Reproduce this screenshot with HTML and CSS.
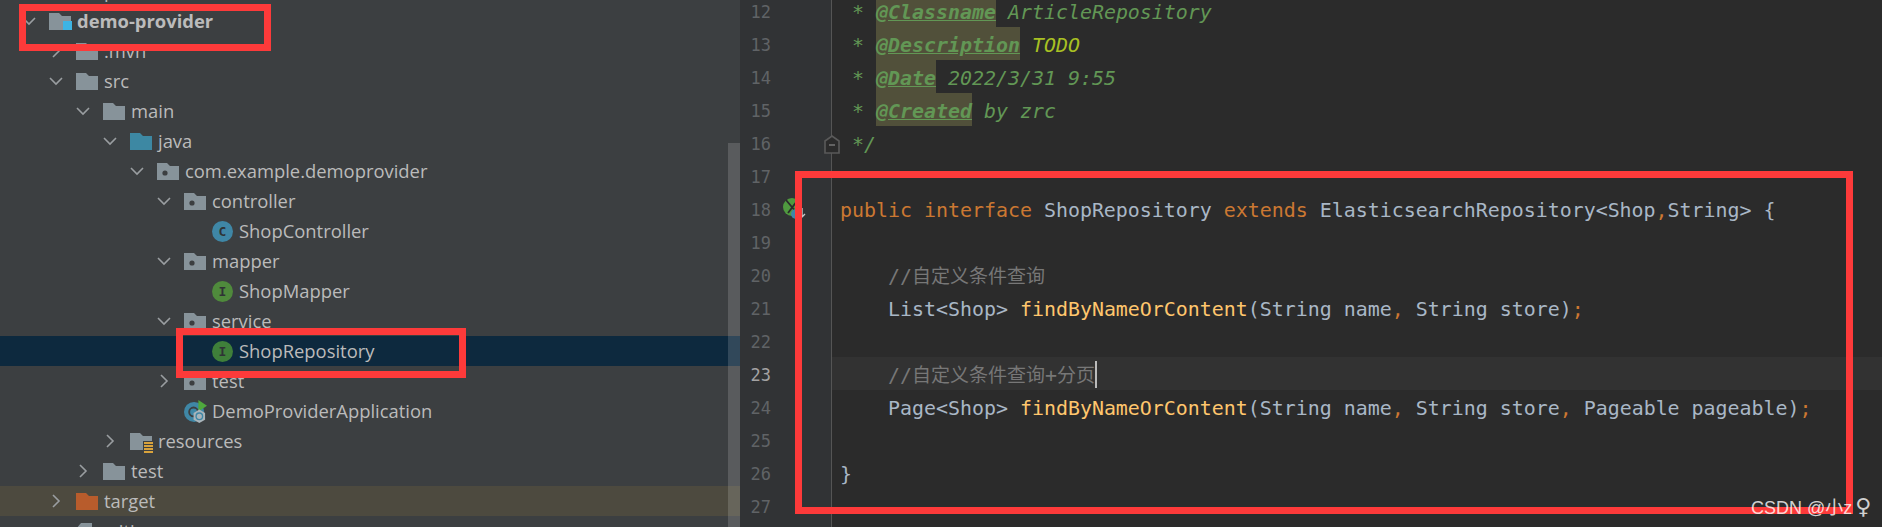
FILE: index.html
```html
<!DOCTYPE html>
<html lang="en">
<head>
<meta charset="utf-8">
<title>ShopRepository</title>
<link rel="stylesheet" href="styles.css">
</head>
<body>
<svg class="defs" width="0" height="0" aria-hidden="true">
  <symbol id="chev-d" viewBox="0 0 14 9"><path d="M1 1l6 6 6-6" fill="none" stroke="#9a9ea1" stroke-width="1.6"/></symbol>
  <symbol id="chev-r" viewBox="0 0 9 14"><path d="M1 1l6 6-6 6" fill="none" stroke="#9a9ea1" stroke-width="1.6"/></symbol>
  <symbol id="folder" viewBox="0 0 22 17"><path d="M0 0h10l3 3h9v14H0z" fill="currentColor"/></symbol>
  <symbol id="pkg" viewBox="0 0 22 17"><path d="M0 0h10l3 3h9v14H0z" fill="#87939a"/><circle cx="8" cy="10" r="2.6" fill="#3c3f41"/></symbol>
</svg>
<div class="app">
  <aside class="tree">
    <div class="row d1 clip"><span class="chev"></span><span class="ic"></span><span class="name">p</span></div>
    <div class="row d0"><span class="chev"><svg class="cd"><use href="#chev-d"/></svg></span><span class="ic"><svg class="modf" viewBox="0 0 23 17"><path d="M0 0h10l3 3h9v6h-8v8H0z" fill="#87939a"/><rect x="14" y="8" width="9" height="9" fill="#3db4e4"/></svg></span><span class="name bold">demo-provider</span></div>
    <div class="row d1"><span class="chev"><svg class="cr"><use href="#chev-r"/></svg></span><span class="ic"><svg class="fi grey"><use href="#folder"/></svg></span><span class="name">.mvn</span></div>
    <div class="row d1"><span class="chev"><svg class="cd"><use href="#chev-d"/></svg></span><span class="ic"><svg class="fi grey"><use href="#folder"/></svg></span><span class="name">src</span></div>
    <div class="row d2"><span class="chev"><svg class="cd"><use href="#chev-d"/></svg></span><span class="ic"><svg class="fi grey"><use href="#folder"/></svg></span><span class="name">main</span></div>
    <div class="row d3"><span class="chev"><svg class="cd"><use href="#chev-d"/></svg></span><span class="ic"><svg class="fi blue"><use href="#folder"/></svg></span><span class="name">java</span></div>
    <div class="row d4"><span class="chev"><svg class="cd"><use href="#chev-d"/></svg></span><span class="ic"><svg class="fi"><use href="#pkg"/></svg></span><span class="name">com.example.demoprovider</span></div>
    <div class="row d5"><span class="chev"><svg class="cd"><use href="#chev-d"/></svg></span><span class="ic"><svg class="fi"><use href="#pkg"/></svg></span><span class="name">controller</span></div>
    <div class="row d6"><span class="chev"></span><span class="ic"><span class="badge cls">C</span></span><span class="name">ShopController</span></div>
    <div class="row d5"><span class="chev"><svg class="cd"><use href="#chev-d"/></svg></span><span class="ic"><svg class="fi"><use href="#pkg"/></svg></span><span class="name">mapper</span></div>
    <div class="row d6"><span class="chev"></span><span class="ic"><span class="badge ifc">I</span></span><span class="name">ShopMapper</span></div>
    <div class="row d5"><span class="chev"><svg class="cd"><use href="#chev-d"/></svg></span><span class="ic"><svg class="fi"><use href="#pkg"/></svg></span><span class="name">service</span></div>
    <div class="row d6 selected"><span class="chev"></span><span class="ic"><span class="badge ifc">I</span></span><span class="name">ShopRepository</span></div>
    <div class="row d5"><span class="chev"><svg class="cr"><use href="#chev-r"/></svg></span><span class="ic"><svg class="fi"><use href="#pkg"/></svg></span><span class="name">test</span></div>
    <div class="row d5"><span class="chev"></span><span class="ic"><svg class="appi" viewBox="0 0 24 24"><circle cx="10.5" cy="12.5" r="10.5" fill="#3f87a6"/><circle cx="10" cy="12.5" r="4.6" fill="none" stroke="#3c3f41" stroke-width="2"/><path d="M15 0l9 6-9 6z" fill="#4fa83d"/><path d="M16 10l6 3.5v7L16 24l-6-3.5v-7z" fill="#a9b4ba"/><circle cx="16" cy="17" r="3.4" fill="none" stroke="#3f87a6" stroke-width="1.4"/></svg></span><span class="name">DemoProviderApplication</span></div>
    <div class="row d3"><span class="chev"><svg class="cr"><use href="#chev-r"/></svg></span><span class="ic"><svg class="resi" viewBox="0 0 23 20"><path d="M0 0h10l3 3h9v5H13v9H0z" fill="#87939a"/><path d="M14 9h9v2h-9zM14 12h9v2h-9zM14 15h9v2h-9zM14 18h9v2h-9z" fill="#d9a33c"/></svg></span><span class="name">resources</span></div>
    <div class="row d2"><span class="chev"><svg class="cr"><use href="#chev-r"/></svg></span><span class="ic"><svg class="fi grey"><use href="#folder"/></svg></span><span class="name">test</span></div>
    <div class="row d1 excluded"><span class="chev"><svg class="cr"><use href="#chev-r"/></svg></span><span class="ic"><svg class="fi orange"><use href="#folder"/></svg></span><span class="name">target</span></div>
    <div class="row d1"><span class="chev"></span><span class="ic"><svg class="fi" viewBox="0 0 22 17"><path d="M5 0h11v17H0V6z" fill="#87939a"/></svg></span><span class="name">.gitignore</span></div>
    <div class="thumb"></div>
  </aside>
  <main class="editor">
    <div class="line"><span class="num">12</span><code class="code doc"> * <span class="tag">@Classname</span> ArticleRepository</code></div>
    <div class="line"><span class="num">13</span><code class="code doc"> * <span class="tag">@Description</span> <span class="todo">TODO</span></code></div>
    <div class="line"><span class="num">14</span><code class="code doc"> * <span class="tag">@Date</span> 2022/3/31 9:55</code></div>
    <div class="line"><span class="num">15</span><code class="code doc"> * <span class="tag">@Created</span> by zrc</code></div>
    <div class="line"><span class="num">16</span><code class="code doc"> */</code></div>
    <div class="line"><span class="num">17</span><code class="code"></code></div>
    <div class="line"><span class="num">18</span><code class="code"><span class="kw">public interface</span> ShopRepository <span class="kw">extends</span> ElasticsearchRepository&lt;Shop<span class="kw">,</span>String&gt; {</code></div>
    <div class="line"><span class="num">19</span><code class="code"></code></div>
    <div class="line"><span class="num">20</span><code class="code cm">    //<span class="cjk">自定义条件查询</span></code></div>
    <div class="line"><span class="num">21</span><code class="code">    List&lt;Shop&gt; <span class="fn">findByNameOrContent</span>(String name<span class="kw">,</span> String store)<span class="kw">;</span></code></div>
    <div class="line"><span class="num">22</span><code class="code"></code></div>
    <div class="line current"><span class="num">23</span><code class="code cm">    //<span class="cjk">自定义条件查询</span>+<span class="cjk">分页</span><span class="caret"></span></code></div>
    <div class="line"><span class="num">24</span><code class="code">    Page&lt;Shop&gt; <span class="fn">findByNameOrContent</span>(String name<span class="kw">,</span> String store<span class="kw">,</span> Pageable pageable)<span class="kw">;</span></code></div>
    <div class="line"><span class="num">25</span><code class="code"></code></div>
    <div class="line"><span class="num">26</span><code class="code">}</code></div>
    <div class="line"><span class="num">27</span><code class="code"></code></div>
    <div class="line"><span class="num"></span><code class="code"></code></div>
  </main>
</div>
<svg class="fold" viewBox="0 0 16 19"><path d="M1 18V6l7-5 7 5v12z" fill="#2b2b2b" stroke="#5a5a5a" stroke-width="1.6"/><path d="M5 10h6" stroke="#777" stroke-width="1.5"/></svg>
<svg class="run" viewBox="0 0 24 22"><circle cx="9" cy="10" r="9" fill="#4f9a3f"/><path d="M3 3l11 13M14 4L5 16" stroke="#2b2b2b" stroke-width="1.8"/><circle cx="13" cy="17" r="5" fill="#3f87a6"/><path d="M19 11v9m-3-3l3 3 3-3" fill="none" stroke="#c8c8c8" stroke-width="1.4"/></svg>
<div class="mark mark-a"></div>
<div class="mark mark-b"></div>
<div class="mark mark-c"></div>
<div class="watermark">CSDN @小z<span class="sign">♀</span></div>
</body>
</html>
```
FILE: styles.css
```css
* { box-sizing: border-box; }
html, body { margin: 0; height: 100%; overflow: hidden; background: #2b2b2b; }
.defs { position: absolute; }
.app { display: flex; height: 527px; }

.tree {
  position: relative;
  flex: 0 0 740px;
  height: 527px;
  overflow: hidden;
  padding-top: 6px;
  background: #3c3f41;
  color: #bbbbbb;
  font-family: "Open Sans", "Liberation Sans", sans-serif;
  font-size: 18.4px;
}
.row { display: flex; align-items: center; height: 30px; white-space: nowrap; }
.clip { margin-top: -30px; }
.d0 { padding-left: 22px; }
.d1 { padding-left: 49px; }
.d2 { padding-left: 76px; }
.d3 { padding-left: 103px; }
.d4 { padding-left: 130px; }
.d5 { padding-left: 157px; }
.d6 { padding-left: 185px; }
.d6 .ic { flex-basis: 27px; }
.selected { background: #0d293e; }
.excluded { background: #4d4a3f; }
.chev { display: flex; align-items: center; flex: 0 0 27px; height: 100%; }
.cd { width: 14px; height: 9px; }
.cr { width: 9px; height: 14px; margin-left: 3px; }
.ic { display: flex; align-items: center; flex: 0 0 28px; height: 100%; }
.fi { width: 22px; height: 17px; }
.modf { width: 23px; height: 17px; }
.resi { width: 23px; height: 20px; margin-top: 3px; }
.appi { width: 23px; height: 23px; }
.grey { color: #87939a; }
.blue { color: #3d88a3; }
.orange { color: #b85c2c; }
.name { line-height: 30px; }
.bold { font-weight: 700; }
.badge {
  display: flex; align-items: center; justify-content: center;
  width: 21px; height: 21px; border-radius: 50%;
  color: #2f3335;
  font: 700 13px "DejaVu Sans Mono", monospace;
}
.cls { background: #3f87a6; }
.ifc { background: #4f8a3c; }
.selected .ifc { background: #3f7f3a; }
.thumb {
  position: absolute; left: 728px; top: 143px; width: 12px; bottom: 0;
  background: rgba(255, 255, 255, 0.15);
}

.editor { flex: 1; min-width: 0; margin-top: -6px; height: 533px; overflow: hidden; }
.line { display: flex; height: 33px; }
.num {
  flex: 0 0 92px;
  padding-top: 2px;
  padding-right: 60px;
  border-right: 1px solid #555555;
  background: #313335;
  color: #606366;
  font: 17px/33px "DejaVu Sans Mono", monospace;
  text-align: right;
}
.code {
  flex: 1;
  padding-left: 8px;
  color: #a9b7c6;
  font: 19.93px/33px "DejaVu Sans Mono", "Noto Sans CJK SC", monospace;
  white-space: pre;
}
.code:not(:empty) { padding-top: 2px; }
.current .num { color: #a4a3a3; }
.current .code { background: #323232; }
.doc { color: #629755; font-style: italic; }
.tag { background: #51503a; font-weight: 700; text-decoration: underline; display: inline-block; height: 33px; margin-top: -2px; padding-top: 2px; vertical-align: top; line-height: 33px; }
.todo { color: #a8c023; }
.kw { color: #cc7832; }
.fn { color: #ffc66d; }
.cm { color: #777777; }
.cjk { font-family: "Noto Sans CJK SC", sans-serif; font-size: 19px; line-height: 1; }
.caret { display: inline-block; width: 2px; height: 27px; background: #bbbbbb; vertical-align: -6px; }

.fold { position: absolute; left: 824px; top: 135px; width: 16px; height: 19px; }
.run { position: absolute; left: 783px; top: 197px; width: 24px; height: 22px; }
.mark { position: absolute; border: 7px solid #fd3a3a; }
.mark-a { left: 19px; top: 4px; width: 252px; height: 47px; }
.mark-b { left: 176px; top: 328px; width: 290px; height: 50px; }
.mark-c { left: 795px; top: 171px; width: 1058px; height: 343px; }
.watermark {
  position: absolute; left: 1751px; top: 494px;
  color: rgba(255, 255, 255, 0.8);
  font: 18px/26px "Liberation Sans", "Noto Sans CJK SC", sans-serif;
  white-space: nowrap;
}
.sign { margin-left: 3px; font: 22px/26px "DejaVu Sans", sans-serif; }
```
